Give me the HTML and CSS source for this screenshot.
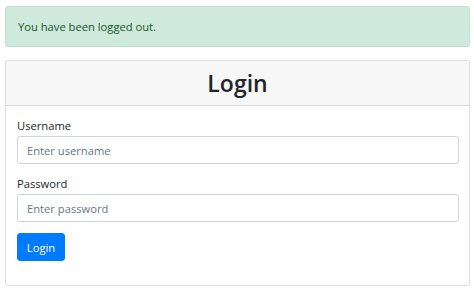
FILE: index.html
```html
<!DOCTYPE html>
<html lang="en">
<head>
<meta charset="utf-8">
<title>Login</title>
<link rel="stylesheet" href="styles.css">
</head>
<body>
<div class="page">
  <div class="alert">You have been logged out.</div>
  <div class="card">
    <div class="card-header"><h2 class="title">Login</h2></div>
    <form class="card-body">
      <div class="group">
        <label class="label" for="u">Username</label>
        <input class="input" id="u" type="text" placeholder="Enter username">
      </div>
      <div class="group">
        <label class="label" for="p">Password</label>
        <input class="input" id="p" type="password" placeholder="Enter password">
      </div>
      <button class="btn" type="button">Login</button>
    </form>
  </div>
</div>
</body>
</html>
```

FILE: styles.css
```css
* { box-sizing: border-box; }
html, body { margin: 0; padding: 0; background: #fff; }
body {
  font-family: "Open Sans", "Noto Sans", "Liberation Sans", sans-serif;
  color: #212529;
}
.page {
  padding: 6px 4px 0 5px;
  display: flex;
  flex-direction: column;
  gap: 13px;
}
.alert {
  height: 41px;
  background: #d0e9dd;
  border: 1px solid #c1e2d2;
  border-radius: 3px;
  color: #155724;
  font-size: 11.2px;
  line-height: 16px;
  padding: 12px 12px 0 12px;
}
.card {
  border: 1px solid rgba(0,0,0,.125);
  border-radius: 3px;
  background: #fff;
}
.card-header {
  height: 45px;
  background: #f7f7f7;
  border-bottom: 1px solid rgba(0,0,0,.125);
  display: flex;
  align-items: center;
  justify-content: center;
}
.title {
  margin: 0;
  font-size: 23px;
  font-weight: 600;
  line-height: 30px;
  color: #212529;
  padding-bottom: 1px;
}
.card-body {
  margin: 0;
  padding: 12px 10px 24px 11px;
  display: flex;
  flex-direction: column;
  align-items: flex-start;
}
.group {
  width: 100%;
  display: flex;
  flex-direction: column;
  margin-bottom: 12px;
}
.group + .group { margin-bottom: 11px; }
.label {
  font-size: 11.2px;
  line-height: 16px;
  margin-bottom: 2px;
  color: #212529;
}
.input {
  width: 100%;
  height: 28px;
  border: 1px solid #ced4da;
  border-radius: 3px;
  padding: 0 9px;
  font-family: inherit;
  font-size: 11.2px;
  color: #495057;
  background: #fff;
  outline: none;
}
.input::placeholder { color: #6c757d; opacity: 1; }
.btn {
  height: 28px;
  width: 48px;
  padding: 0;
  border: 1px solid #007bff;
  background: #007bff;
  color: #fff;
  border-radius: 3px;
  font-family: inherit;
  font-size: 11.2px;
  font-weight: 500;
}
```
